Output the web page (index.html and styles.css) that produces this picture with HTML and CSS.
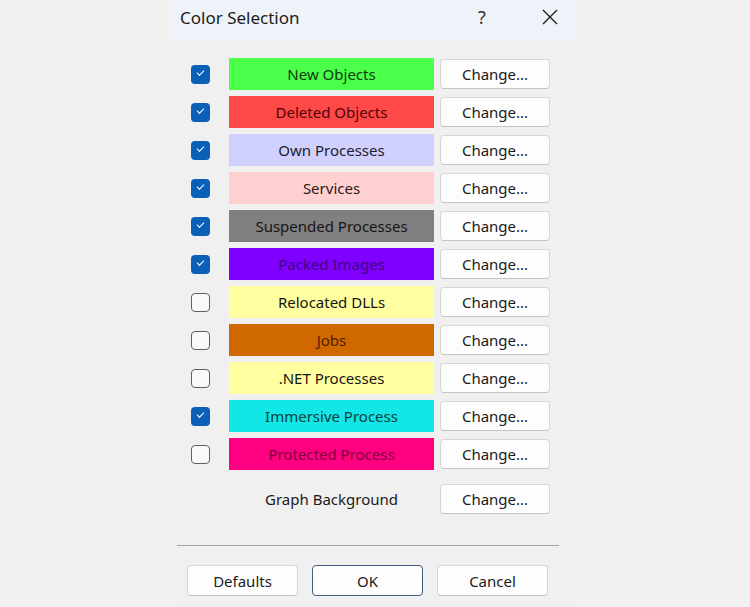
FILE: index.html
```html
<!DOCTYPE html>
<html lang="en">
<head>
<meta charset="utf-8">
<title>Color Selection</title>
<link rel="stylesheet" href="styles.css">
</head>
<body>
<div class="dialog">
  <div class="titlebar">
    <span class="title">Color Selection</span>
    <span class="help">?</span>
    <span class="close">
      <svg width="16" height="16" viewBox="0 0 16 16"><path d="M1 1 L15 15 M15 1 L1 15" stroke="#1a1a1a" stroke-width="1.3" fill="none"/></svg>
    </span>
  </div>
  <div class="content">
    <div class="row"><span class="cb checked"></span><span class="swatch c-new">New Objects</span><button class="btn">Change...</button></div>
    <div class="row"><span class="cb checked"></span><span class="swatch c-del">Deleted Objects</span><button class="btn">Change...</button></div>
    <div class="row"><span class="cb checked"></span><span class="swatch c-own">Own Processes</span><button class="btn">Change...</button></div>
    <div class="row"><span class="cb checked"></span><span class="swatch c-svc">Services</span><button class="btn">Change...</button></div>
    <div class="row"><span class="cb checked"></span><span class="swatch c-susp">Suspended Processes</span><button class="btn">Change...</button></div>
    <div class="row"><span class="cb checked"></span><span class="swatch c-pack">Packed Images</span><button class="btn">Change...</button></div>
    <div class="row"><span class="cb"></span><span class="swatch c-yel">Relocated DLLs</span><button class="btn">Change...</button></div>
    <div class="row"><span class="cb"></span><span class="swatch c-jobs">Jobs</span><button class="btn">Change...</button></div>
    <div class="row"><span class="cb"></span><span class="swatch c-yel">.NET Processes</span><button class="btn">Change...</button></div>
    <div class="row"><span class="cb checked"></span><span class="swatch c-imm">Immersive Process</span><button class="btn">Change...</button></div>
    <div class="row"><span class="cb"></span><span class="swatch c-prot">Protected Process</span><button class="btn">Change...</button></div>
    <div class="row graph"><span class="cb-space"></span><span class="swatch plain">Graph Background</span><button class="btn">Change...</button></div>
  </div>
  <div class="separator"></div>
  <div class="footer">
    <button class="btn wide">Defaults</button>
    <button class="btn wide default">OK</button>
    <button class="btn wide">Cancel</button>
  </div>
</div>
</body>
</html>
```

FILE: styles.css
```css
html, body {
  margin: 0;
  padding: 0;
  background: #f1f1f1;
  font-family: "Noto Sans", "Open Sans", "Liberation Sans", sans-serif;
  color: #1a1a1a;
}

.dialog {
  width: 404px;
  margin-left: 172px;
  background: #f0f0f0;
  height: 607px;
  display: flex;
  flex-direction: column;
}

.titlebar {
  height: 40px;
  background: #eef2f9;
  display: flex;
  align-items: center;
  padding-left: 8px;
}

.title {
  font-size: 17px;
  color: #1c1c1c;
  flex: 1;
  margin-top: -6px;
}

.help {
  font-size: 18px;
  color: #333;
  width: 20px;
  margin-top: -6px;
  text-align: center;
}

.close {
  display: flex;
  width: 16px;
  height: 16px;
  margin-left: 50px;
  margin-right: 18px;
  margin-top: -6px;
}

.content {
  padding-top: 18px;
  display: flex;
  flex-direction: column;
  gap: 6px;
}

.row {
  display: flex;
  align-items: center;
  height: 32px;
  padding-left: 19px;
}

.cb, .cb-space {
  width: 19px;
  height: 19px;
  box-sizing: border-box;
  margin-right: 19px;
  flex: none;
}

.cb {
  border: 1px solid #5f5f5f;
  border-radius: 4px;
  background: #f9f9f9;
  position: relative;
}

.cb.checked {
  border: none;
  background: #0a5fb6;
}

.cb.checked::after {
  content: "";
  position: absolute;
  left: 6px;
  top: 5px;
  width: 6px;
  height: 3px;
  border-left: 1.2px solid #fff;
  border-bottom: 1.2px solid #fff;
  transform: rotate(-45deg);
}

.swatch {
  width: 205px;
  height: 32px;
  flex: none;
  display: flex;
  align-items: center;
  justify-content: center;
  font-size: 15px;
  color: #151515;
}

.c-new { background: #4bff4b; color: #0d3d0d; }
.c-del { background: #ff4848; color: #4d0505; }
.c-own { background: #d0d0ff; color: #1c1c2c; }
.c-svc { background: #ffd0d0; color: #2a1a1a; }
.c-susp { background: #808080; color: #151515; }
.c-pack { background: #8000ff; color: #3d0080; }
.c-yel { background: #ffffa0; color: #151515; }
.c-jobs { background: #d06800; color: #551c00; }
.c-imm { background: #12e6e6; color: #0b3f40; }
.c-prot { background: #ff0080; color: #7d0040; }
.plain { background: transparent; color: #1a1a1a; }

.btn {
  font-family: "Noto Sans", "Open Sans", "Liberation Sans", sans-serif;
  font-size: 15px;
  color: #1a1a1a;
  background: #fdfdfd;
  border: 1px solid #d6d6d6;
  border-bottom-color: #c4c4c4;
  border-radius: 4px;
  width: 110px;
  height: 30px;
  padding: 0;
  margin-left: 6px;
  flex: none;
}

.row.graph {
  margin-top: 7px;
}

.separator {
  height: 1px;
  background: #a3a3a3;
  margin: 30px 17px 0 5px;
}

.footer {
  display: flex;
  gap: 14px;
  padding-left: 15px;
  margin-top: 19px;
}

.btn.wide {
  width: 111px;
  height: 31px;
  margin-left: 0;
}

.btn.default {
  border: 1px solid #3f5f7f;
}
```
